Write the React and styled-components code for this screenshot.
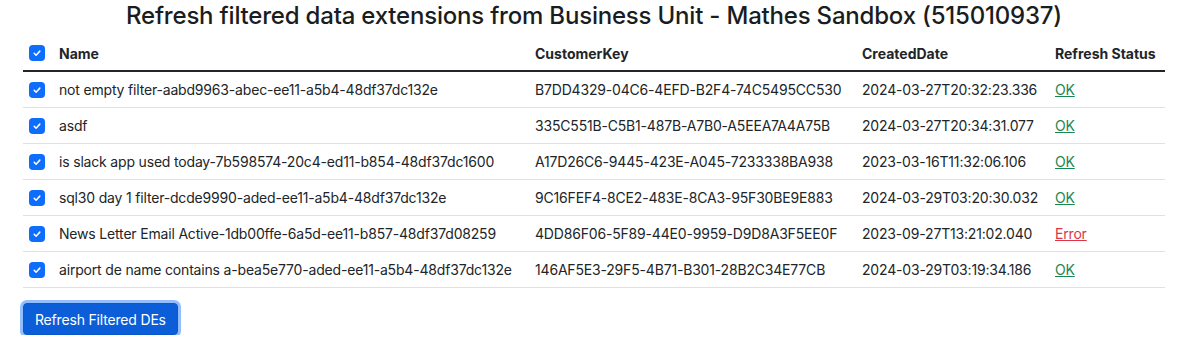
import React from "react";
import styled, { createGlobalStyle } from "styled-components";

const GlobalStyle = createGlobalStyle`
  html, body {
    margin: 0;
    background: #fff;
    color: #212529;
    font-family: Inter, "Liberation Sans", sans-serif;
  }
`;

const rows = [
  {
    name: "not empty filter-aabd9963-abec-ee11-a5b4-48df37dc132e",
    key: "B7DD4329-04C6-4EFD-B2F4-74C5495CC530",
    date: "2024-03-27T20:32:23.336",
    status: "OK",
  },
  {
    name: "asdf",
    key: "335C551B-C5B1-487B-A7B0-A5EEA7A4A75B",
    date: "2024-03-27T20:34:31.077",
    status: "OK",
  },
  {
    name: "is slack app used today-7b598574-20c4-ed11-b854-48df37dc1600",
    key: "A17D26C6-9445-423E-A045-7233338BA938",
    date: "2023-03-16T11:32:06.106",
    status: "OK",
  },
  {
    name: "sql30 day 1 filter-dcde9990-aded-ee11-a5b4-48df37dc132e",
    key: "9C16FEF4-8CE2-483E-8CA3-95F30BE9E883",
    date: "2024-03-29T03:20:30.032",
    status: "OK",
  },
  {
    name: "News Letter Email Active-1db00ffe-6a5d-ee11-b857-48df37d08259",
    key: "4DD86F06-5F89-44E0-9959-D9D8A3F5EE0F",
    date: "2023-09-27T13:21:02.040",
    status: "Error",
  },
  {
    name: "airport de name contains a-bea5e770-aded-ee11-a5b4-48df37dc132e",
    key: "146AF5E3-29F5-4B71-B301-28B2C34E77CB",
    date: "2024-03-29T03:19:34.186",
    status: "OK",
  },
];

function Check() {
  return (
    <CheckBox>
      <svg width="10" height="10" viewBox="0 0 16 16">
        <path
          d="M3.5 8.5l3 3 6-6.5"
          fill="none"
          stroke="#fff"
          strokeWidth="2.4"
          strokeLinecap="round"
          strokeLinejoin="round"
        />
      </svg>
    </CheckBox>
  );
}

export default function App() {
  return (
    <Page>
      <GlobalStyle />
      <Title>
        Refresh filtered data extensions from Business Unit - Mathes Sandbox
        (515010937)
      </Title>
      <Table>
        <colgroup>
          <col style={{ width: 28 }} />
          <col style={{ width: 476 }} />
          <col style={{ width: 327 }} />
          <col style={{ width: 193 }} />
          <col />
        </colgroup>
        <thead>
          <tr>
            <HeadCell $check>
              <Check />
            </HeadCell>
            <HeadCell>Name</HeadCell>
            <HeadCell>CustomerKey</HeadCell>
            <HeadCell>CreatedDate</HeadCell>
            <HeadCell>Refresh Status</HeadCell>
          </tr>
        </thead>
        <tbody>
          {rows.map((r) => (
            <tr key={r.key}>
              <Cell $check>
                <Check />
              </Cell>
              <Cell>{r.name}</Cell>
              <Cell>{r.key}</Cell>
              <Cell>{r.date}</Cell>
              <Cell>
                <StatusLink href="#" $error={r.status === "Error"}>
                  {r.status}
                </StatusLink>
              </Cell>
            </tr>
          ))}
        </tbody>
      </Table>
      <Button>Refresh Filtered DEs</Button>
    </Page>
  );
}

const Page = styled.div`
  padding: 0 35px 0 23px;
`;

const Title = styled.h1`
  margin: 0;
  padding-top: 1px;
  height: 35px;
  font-size: 24px;
  font-weight: 500;
  letter-spacing: -0.2px;
  line-height: 30px;
  text-align: center;
  color: #1a1d20;
`;

const Table = styled.table`
  width: 1142px;
  border-collapse: collapse;
  table-layout: fixed;
  font-size: 14px;
  letter-spacing: -0.18px;
  margin-bottom: 15px;
`;

const HeadCell = styled.th`
  text-align: left;
  font-weight: 700;
  letter-spacing: 0;
  height: 34px;
  padding: 0 0 0 ${(p) => (p.$check ? "6px" : "8px")};
  border-bottom: 2px solid #212529;
  vertical-align: middle;
  white-space: nowrap;
`;

const Cell = styled.td`
  height: 35px;
  padding: 0 0 0 ${(p) => (p.$check ? "6px" : "8px")};
  border-bottom: 1px solid #dee2e6;
  vertical-align: middle;
  white-space: nowrap;
`;

const CheckBox = styled.span`
  display: flex;
  align-items: center;
  justify-content: center;
  width: 16px;
  height: 16px;
  border-radius: 4px;
  background: #0d6efd;
`;

const StatusLink = styled.a`
  color: ${(p) => (p.$error ? "#dc3545" : "#198754")};
  text-decoration: underline;
`;

const Button = styled.button`
  display: block;
  height: 32px;
  padding: 0 11px;
  border: 1px solid #0a58ca;
  border-radius: 4px;
  background: #0b5ed7;
  color: #fff;
  font-family: inherit;
  font-size: 14px;
  letter-spacing: -0.18px;
  box-shadow: 0 0 0 3px rgba(13, 110, 253, 0.45);
  cursor: pointer;
`;
